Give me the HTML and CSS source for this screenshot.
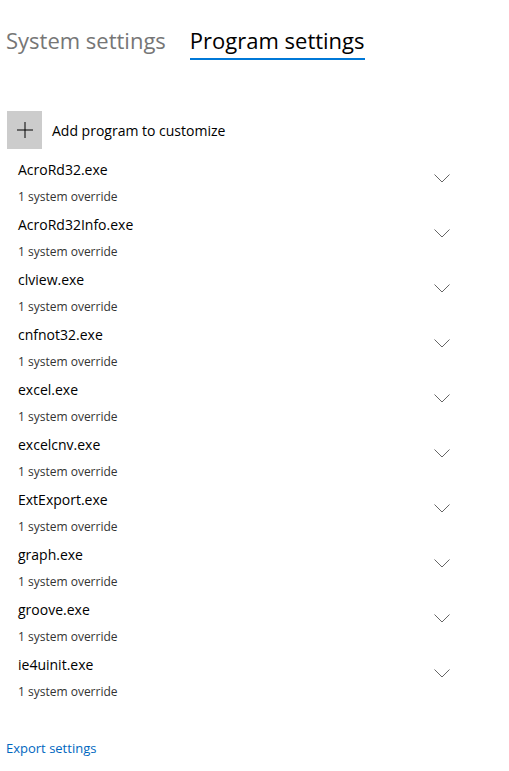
FILE: index.html
```html
<!DOCTYPE html>
<html lang="en">
<head>
<meta charset="utf-8">
<title>Program settings</title>
<link rel="stylesheet" href="styles.css">
</head>
<body>
<div class="page">
  <nav class="tabs">
    <div class="tab">System settings</div>
    <div class="tab active">Program settings</div>
  </nav>

  <div class="add">
    <div class="add-btn">
      <svg width="16" height="16" viewBox="0 0 16 16"><path d="M8 0V16M0 8H16" stroke="#000" stroke-width="1" fill="none"/></svg>
    </div>
    <span class="add-label">Add program to customize</span>
  </div>

  <ul class="list">
    <li class="row"><div class="info"><div class="name">AcroRd32.exe</div><div class="sub">1 system override</div></div><svg class="chev" width="16" height="9" viewBox="0 0 16 9"><path d="M0.5 0.5L8 8L15.5 0.5" stroke="#666" stroke-width="1" fill="none"/></svg></li>
    <li class="row"><div class="info"><div class="name">AcroRd32Info.exe</div><div class="sub">1 system override</div></div><svg class="chev" width="16" height="9" viewBox="0 0 16 9"><path d="M0.5 0.5L8 8L15.5 0.5" stroke="#666" stroke-width="1" fill="none"/></svg></li>
    <li class="row"><div class="info"><div class="name">clview.exe</div><div class="sub">1 system override</div></div><svg class="chev" width="16" height="9" viewBox="0 0 16 9"><path d="M0.5 0.5L8 8L15.5 0.5" stroke="#666" stroke-width="1" fill="none"/></svg></li>
    <li class="row"><div class="info"><div class="name">cnfnot32.exe</div><div class="sub">1 system override</div></div><svg class="chev" width="16" height="9" viewBox="0 0 16 9"><path d="M0.5 0.5L8 8L15.5 0.5" stroke="#666" stroke-width="1" fill="none"/></svg></li>
    <li class="row"><div class="info"><div class="name">excel.exe</div><div class="sub">1 system override</div></div><svg class="chev" width="16" height="9" viewBox="0 0 16 9"><path d="M0.5 0.5L8 8L15.5 0.5" stroke="#666" stroke-width="1" fill="none"/></svg></li>
    <li class="row"><div class="info"><div class="name">excelcnv.exe</div><div class="sub">1 system override</div></div><svg class="chev" width="16" height="9" viewBox="0 0 16 9"><path d="M0.5 0.5L8 8L15.5 0.5" stroke="#666" stroke-width="1" fill="none"/></svg></li>
    <li class="row"><div class="info"><div class="name">ExtExport.exe</div><div class="sub">1 system override</div></div><svg class="chev" width="16" height="9" viewBox="0 0 16 9"><path d="M0.5 0.5L8 8L15.5 0.5" stroke="#666" stroke-width="1" fill="none"/></svg></li>
    <li class="row"><div class="info"><div class="name">graph.exe</div><div class="sub">1 system override</div></div><svg class="chev" width="16" height="9" viewBox="0 0 16 9"><path d="M0.5 0.5L8 8L15.5 0.5" stroke="#666" stroke-width="1" fill="none"/></svg></li>
    <li class="row"><div class="info"><div class="name">groove.exe</div><div class="sub">1 system override</div></div><svg class="chev" width="16" height="9" viewBox="0 0 16 9"><path d="M0.5 0.5L8 8L15.5 0.5" stroke="#666" stroke-width="1" fill="none"/></svg></li>
    <li class="row"><div class="info"><div class="name">ie4uinit.exe</div><div class="sub">1 system override</div></div><svg class="chev" width="16" height="9" viewBox="0 0 16 9"><path d="M0.5 0.5L8 8L15.5 0.5" stroke="#666" stroke-width="1" fill="none"/></svg></li>
  </ul>

  <a class="export" href="#">Export settings</a>
</div>
</body>
</html>
```
FILE: styles.css
```css
html, body {
  margin: 0;
  padding: 0;
  background: #fff;
}
body {
  font-family: "Open Sans", "Noto Sans", sans-serif;
  color: #000;
}
.page {
  width: 509px;
}
.tabs {
  display: flex;
  gap: 24px;
  padding: 24px 0 0 6px;
}
.tab {
  font-size: 22px;
  line-height: 32px;
  color: #767676;
  padding-bottom: 2px;
  border-bottom: 2px solid transparent;
}
.tab.active {
  color: #000;
  border-bottom-color: #0078d7;
}
.add {
  display: flex;
  align-items: center;
  gap: 10px;
  margin: 51px 0 0 7px;
}
.add-btn {
  width: 35px;
  height: 38px;
  background: #cccccc;
  display: flex;
  align-items: center;
  justify-content: center;
}
.add-btn svg {
  display: block;
}
.add-label {
  font-size: 14px;
}
.list {
  list-style: none;
  margin: 7px 0 0 0;
  padding: 0;
}
.row {
  display: flex;
  align-items: flex-start;
  justify-content: space-between;
  height: 55px;
  box-sizing: border-box;
  padding: 4px 59px 0 18px;
}
.info {
  display: flex;
  flex-direction: column;
  gap: 8px;
}
.name {
  font-size: 14px;
  line-height: 20px;
}
.sub {
  font-size: 12px;
  line-height: 18px;
  color: #333;
}
.chev {
  display: block;
  margin-top: 14px;
}
.export {
  display: inline-block;
  margin: 33px 0 0 6px;
  font-size: 13px;
  line-height: 18px;
  color: #0067c0;
  text-decoration: none;
}
```
